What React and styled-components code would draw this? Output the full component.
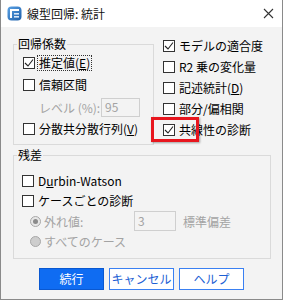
import React from 'react';
import styled, { createGlobalStyle } from 'styled-components';

const Global = createGlobalStyle`
  html, body { margin: 0; padding: 0; background: #fff; }
  body {
    font-family: "Noto Sans CJK JP", "Noto Sans", sans-serif;
    font-size: 12px;
    color: #000;
  }
  * { box-sizing: border-box; }
`;

const Window = styled.div`
  width: 283px;
  height: 300px;
  display: flex;
  flex-direction: column;
  background: #f3f3f3;
  border: 1px solid #8a8a8a;
  border-top: none;
`;

const TitleBar = styled.div`
  height: 27px;
  flex-shrink: 0;
  background: #fff;
  display: flex;
  align-items: center;
  padding: 0 8px 0 6px;
`;

const TitleText = styled.span`
  flex: 1;
  margin-left: 5px;
  font-size: 12px;
  line-height: 14px;
  color: #111;
`;

const Body = styled.div`
  flex: 1;
  display: flex;
  flex-direction: column;
  padding: 10px 10px 0 12px;
`;

const TopRow = styled.div`
  display: flex;
  align-items: flex-start;
  gap: 9px;
`;

const Group = styled.fieldset`
  margin: ${p => p.$mt || 0}px 0 0 0;
  padding: 0;
  width: ${p => p.$w}px;
  border: 1px solid #dadada;
  min-width: 0;
`;

const Legend = styled.legend`
  margin-left: 3px;
  padding: 0 1px;
  font-size: 12px;
  line-height: 14px;
`;

const GroupContent = styled.div`
  display: flex;
  flex-direction: column;
  padding: ${p => p.$pt}px 0 ${p => p.$pb}px ${p => p.$pl}px;
`;

const Row = styled.div`
  display: flex;
  align-items: center;
  height: ${p => p.$h}px;
  padding-left: ${p => p.$indent || 0}px;
  color: ${p => (p.$disabled ? '#a3a3a3' : '#000')};
  white-space: nowrap;
`;

const RightColumn = styled.div`
  position: relative;
  margin-top: -2px;
  display: flex;
  flex-direction: column;
`;

const Box = styled.span`
  width: 12px;
  height: 12px;
  flex-shrink: 0;
  border: 1px solid #333;
  background: #fff;
  display: flex;
  align-items: center;
  justify-content: center;
  margin-right: 2px;
`;

const Label = styled.span`
  line-height: 14px;
  padding: 0 1px;
  border: 1px ${p => (p.$focus ? 'dotted #333' : 'solid transparent')};
`;

const Ul = styled.span`
  text-decoration: underline;
`;

const Radio = styled.span`
  width: 11px;
  height: 11px;
  flex-shrink: 0;
  border-radius: 50%;
  border: 1px solid #a8a8a8;
  background: ${p => (p.$on ? '#e6e6e6' : '#cdcdcd')};
  display: flex;
  align-items: center;
  justify-content: center;
  margin-right: 3px;
  &::after {
    content: '';
    display: ${p => (p.$on ? 'block' : 'none')};
    width: 5px;
    height: 5px;
    border-radius: 50%;
    background: #8a8a8a;
  }
`;

const Field = styled.span`
  width: ${p => p.$w}px;
  height: ${p => p.$h}px;
  flex-shrink: 0;
  border: 1px solid #cfcfcf;
  background: #f3f3f3;
  color: #a3a3a3;
  display: flex;
  align-items: center;
  padding-left: 3px;
  line-height: 14px;
`;

const FixedText = styled.span`
  width: ${p => p.$w}px;
  flex-shrink: 0;
`;

const Unit = styled.span`
  margin-left: 7px;
`;

const Highlight = styled.div`
  position: absolute;
  left: -12px;
  top: 82px;
  width: 48px;
  height: 25px;
  border: 3px solid #e8161e;
  box-shadow: 1px 1px 2px rgba(0, 0, 0, 0.35);
  pointer-events: none;
`;

const ButtonRow = styled.div`
  display: flex;
  justify-content: center;
  gap: 5px;
  margin-top: 9px;
  padding-right: 2px;
`;

const Button = styled.button`
  width: 65px;
  height: 22px;
  padding: 0;
  font-family: inherit;
  font-size: 12px;
  line-height: 14px;
  border: 1px solid ${p => (p.$primary ? '#0a58d0' : '#3a80f2')};
  background: ${p => (p.$primary ? '#0f6cf2' : '#fff')};
  color: ${p => (p.$primary ? '#fff' : '#1c5fd4')};
`;

const Check = () => (
  <svg width="10" height="10" viewBox="0 0 10 10">
    <polyline points="1,5 4,8 9,1.5" fill="none" stroke="#222" strokeWidth="1.1" />
  </svg>
);

const CheckRow = ({ checked, h, children, focus }) => (
  <Row $h={h}>
    <Box>{checked && <Check />}</Box>
    <Label $focus={focus}>{children}</Label>
  </Row>
);

const AppIcon = () => (
  <svg width="15" height="15" viewBox="0 0 15 15">
    <defs>
      <linearGradient id="ig" x1="0" y1="0" x2="1" y2="1">
        <stop offset="0" stopColor="#5aa2e6" />
        <stop offset="1" stopColor="#1f5fa8" />
      </linearGradient>
    </defs>
    <rect x="0.5" y="0.5" width="14" height="14" rx="4" fill="url(#ig)" />
    <rect x="3" y="3" width="2" height="9" fill="#fff" />
    <rect x="5" y="3" width="7" height="2" fill="#fff" />
    <rect x="7" y="7" width="5" height="1.6" fill="#dbe9f8" />
    <rect x="7" y="10" width="5" height="1.6" fill="#dbe9f8" />
  </svg>
);

const CloseIcon = () => (
  <svg width="11" height="11" viewBox="0 0 11 11">
    <path d="M1 1 L10 10 M10 1 L1 10" stroke="#333" strokeWidth="1.1" fill="none" />
  </svg>
);

export default function App() {
  return (
    <>
      <Global />
      <Window>
        <TitleBar>
          <AppIcon />
          <TitleText>線型回帰: 統計</TitleText>
          <CloseIcon />
        </TitleBar>
        <Body>
          <TopRow>
            <Group $w={141}>
              <Legend>回帰係数</Legend>
              <GroupContent $pt={1} $pb={4} $pl={9}>
                <CheckRow checked h={22} focus>
                  推定値(<Ul>E</Ul>)
                </CheckRow>
                <CheckRow h={22}>信頼区間</CheckRow>
                <Row $h={22} $indent={16} $disabled>
                  <FixedText $w={62}>レベル (%):</FixedText>
                  <Field $w={39} $h={19}>95</Field>
                </Row>
                <CheckRow h={22}>
                  分散共分散行列(<Ul>V</Ul>)
                </CheckRow>
              </GroupContent>
            </Group>
            <RightColumn>
              <CheckRow checked h={21}>モデルの適合度</CheckRow>
              <CheckRow h={21}>R2 乗の変化量</CheckRow>
              <CheckRow h={21}>
                記述統計(<Ul>D</Ul>)
              </CheckRow>
              <CheckRow h={21}>部分/偏相関</CheckRow>
              <CheckRow checked h={21}>共線性の診断</CheckRow>
              <Highlight />
            </RightColumn>
          </TopRow>
          <Group $w={258} $mt={3}>
            <Legend>残差</Legend>
            <GroupContent $pt={9} $pb={7} $pl={8}>
              <CheckRow h={20}>
                D<Ul>u</Ul>rbin-Watson
              </CheckRow>
              <CheckRow h={20}>ケースごとの診断</CheckRow>
              <Row $h={20} $indent={8} $disabled>
                <Radio $on />
                <FixedText $w={90}>外れ値:</FixedText>
                <Field $w={42} $h={20}>3</Field>
                <Unit>標準偏差</Unit>
              </Row>
              <Row $h={20} $indent={8} $disabled>
                <Radio />
                <span>すべてのケース</span>
              </Row>
            </GroupContent>
          </Group>
          <ButtonRow>
            <Button $primary>続行</Button>
            <Button>キャンセル</Button>
            <Button>ヘルプ</Button>
          </ButtonRow>
        </Body>
      </Window>
    </>
  );
}
